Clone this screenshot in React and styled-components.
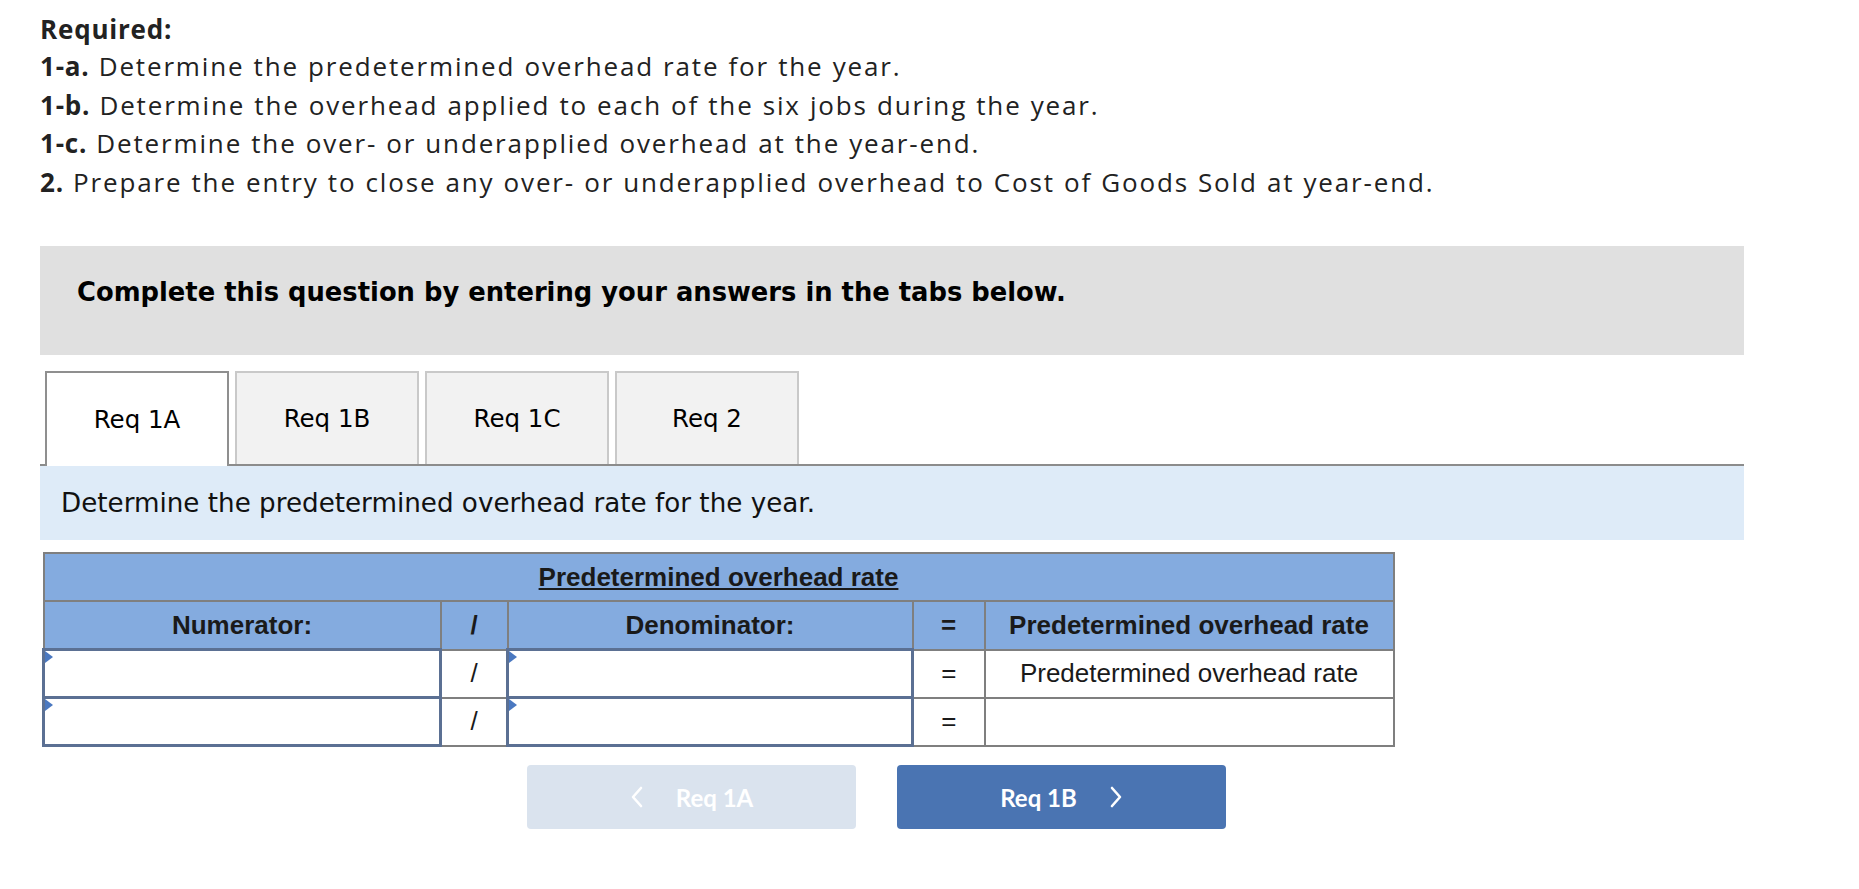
import React from "react";
import styled, { createGlobalStyle, css } from "styled-components";

const GlobalStyle = createGlobalStyle`
  body {
    margin: 0;
    background: #ffffff;
  }
`;

const Page = styled.div`
  padding: 12px 0 40px 40px;
  width: 1704px;
`;

// ====================== question text ======================

const Instructions = styled.div`
  font-family: "Open Sans", Lato, sans-serif;
  font-size: 26px;
  letter-spacing: 1.85px;
  word-spacing: 0.5px;
  line-height: 38.5px;
  color: #222222;

  b {
    font-weight: 700;
    letter-spacing: 0.8px;
  }
`;

const Heading = styled.div`
  line-height: 35px;
`;

const Banner = styled.div`
  margin-top: 45px;
  height: 109px;
  box-sizing: border-box;
  padding: 31px 0 0 37px;
  background: #e0e0e0;
  font-family: "DejaVu Sans", Verdana, sans-serif;
  font-weight: bold;
  font-size: 25.8px;
  line-height: 30px;
  color: #000000;
`;

// ====================== tabs ======================

const TabBar = styled.div`
  margin-top: 16px;
  display: flex;
  gap: 6px;
  padding-left: 5px;
  height: 93px;
  border-bottom: 2px solid #8c8c8c;
`;

const Tab = styled.div`
  width: 184px;
  box-sizing: border-box;
  height: 93px;
  display: flex;
  align-items: center;
  justify-content: center;
  font-family: "DejaVu Sans", Verdana, sans-serif;
  font-size: 24.5px;
  color: #000000;
  background: #f2f2f2;
  border: 2px solid #c9c9c9;
  border-bottom: none;

  ${(props) =>
    props.active &&
    css`
      background: #ffffff;
      border-color: #8f8f8f;
      height: 95px;
      position: relative;
      z-index: 1;
    `}
`;

const Prompt = styled.div`
  height: 74px;
  display: flex;
  align-items: center;
  padding-left: 21px;
  background: #deebf8;
  font-family: "DejaVu Sans", Verdana, sans-serif;
  font-size: 26.2px;
  color: #111111;
`;

// ====================== table ======================

const RateTable = styled.table`
  margin: 12px 0 0 2px;
  width: 1350px;
  table-layout: fixed;
  border-collapse: collapse;
  border: 2px solid #7f7f7f;
  font-family: "Liberation Sans", Arial, sans-serif;
  font-size: 26px;
  color: #1a1a1a;
`;

const HeadCell = styled.th`
  height: 46px;
  padding: 0;
  background: #84abdf;
  border: 2px solid #7f7f7f;
  font-weight: bold;
  text-align: center;

  ${(props) =>
    props.title &&
    css`
      text-decoration: underline;
    `}
`;

const Cell = styled.td`
  height: 45px;
  padding: 0;
  background: #ffffff;
  border: 2px solid #7f7f7f;
  text-align: center;
`;

const InputCell = styled.td`
  height: 45px;
  padding: 0;
  background: #ffffff;
  border: 3px solid #5b7093;
  position: relative;

  &::before {
    content: "";
    position: absolute;
    left: 0;
    top: 0;
    border-left: 8px solid #4a78c0;
    border-top: 6px solid transparent;
    border-bottom: 6px solid transparent;
  }
`;

const Field = styled.input`
  width: 100%;
  height: 42px;
  box-sizing: border-box;
  border: none;
  outline: none;
  background: transparent;
  font-family: "Liberation Sans", Arial, sans-serif;
  font-size: 22px;
  padding: 0 10px;
  display: block;
`;

// ====================== buttons ======================

const NavRow = styled.div`
  margin: 18px 0 0 487px;
  display: flex;
  gap: 41px;
`;

const NavButton = styled.button`
  width: 329px;
  height: 64px;
  border: none;
  border-radius: 4px;
  display: flex;
  align-items: center;
  justify-content: center;
  gap: 32px;
  background: ${(props) => (props.disabled ? "#dae3ee" : "#4a74b2")};
  color: #ffffff;
  font-family: Lato, "Open Sans", sans-serif;
  font-weight: bold;
  font-size: 24px;
  padding: 0;
`;

const Chevron = ({ dir }) => (
  <svg width="14" height="24" viewBox="0 0 14 24">
    <polyline
      points={dir === "left" ? "11,3 3,12 11,21" : "3,3 11,12 3,21"}
      fill="none"
      stroke="#ffffff"
      strokeWidth="2.6"
      strokeLinecap="round"
      strokeLinejoin="round"
    />
  </svg>
);

const tabs = ["Req 1A", "Req 1B", "Req 1C", "Req 2"];

const App = () => (
  <>
    <GlobalStyle />
    <Page>
      <Instructions>
        <Heading>
          <b>Required:</b>
        </Heading>
        <div>
          <b>1-a.</b> Determine the predetermined overhead rate for the year.
        </div>
        <div>
          <b>1-b.</b> Determine the overhead applied to each of the six jobs
          during the year.
        </div>
        <div>
          <b>1-c.</b> Determine the over- or underapplied overhead at the
          year-end.
        </div>
        <div>
          <b>2.</b> Prepare the entry to close any over- or underapplied
          overhead to Cost of Goods Sold at year-end.
        </div>
      </Instructions>

      <Banner>
        Complete this question by entering your answers in the tabs below.
      </Banner>

      <TabBar>
        {tabs.map((t, i) => (
          <Tab key={t} active={i === 0}>
            {t}
          </Tab>
        ))}
      </TabBar>

      <Prompt>Determine the predetermined overhead rate for the year.</Prompt>

      <RateTable>
        <colgroup>
          <col style={{ width: 397 }} />
          <col style={{ width: 67 }} />
          <col style={{ width: 405 }} />
          <col style={{ width: 72 }} />
          <col style={{ width: 409 }} />
        </colgroup>
        <thead>
          <tr>
            <HeadCell colSpan={5} title="true">
              Predetermined overhead rate
            </HeadCell>
          </tr>
          <tr>
            <HeadCell>Numerator:</HeadCell>
            <HeadCell>/</HeadCell>
            <HeadCell>Denominator:</HeadCell>
            <HeadCell>=</HeadCell>
            <HeadCell>Predetermined overhead rate</HeadCell>
          </tr>
        </thead>
        <tbody>
          <tr>
            <InputCell>
              <Field />
            </InputCell>
            <Cell>/</Cell>
            <InputCell>
              <Field />
            </InputCell>
            <Cell>=</Cell>
            <Cell>Predetermined overhead rate</Cell>
          </tr>
          <tr>
            <InputCell>
              <Field />
            </InputCell>
            <Cell>/</Cell>
            <InputCell>
              <Field />
            </InputCell>
            <Cell>=</Cell>
            <Cell></Cell>
          </tr>
        </tbody>
      </RateTable>

      <NavRow>
        <NavButton disabled>
          <Chevron dir="left" />
          Req 1A
        </NavButton>
        <NavButton>
          Req 1B
          <Chevron dir="right" />
        </NavButton>
      </NavRow>
    </Page>
  </>
);

export default App;
